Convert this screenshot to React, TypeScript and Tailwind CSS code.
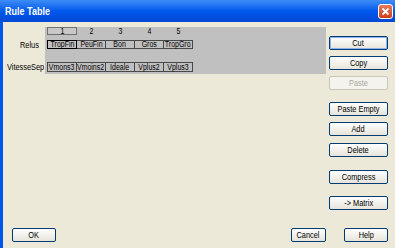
import React from "react";

const relus = ["TropFin", "PeuFin", "Bon", "Gros", "TropGro"];
const vitesse = ["Vmons3", "Vmoins2", "Ideale", "Vplus2", "Vplus3"];

// the dialog's text is a narrow, tall face: squeeze it sideways
function Narrow({ children, left = false }: { children: React.ReactNode; left?: boolean }) {
  return (
    <span className={`inline-block whitespace-nowrap scale-x-[0.82] ${left ? "origin-left" : "origin-center"}`}>
      {children}
    </span>
  );
}

function XpButton({
  label,
  className = "",
  disabled = false,
  focused = false,
}: {
  label: string;
  className?: string;
  disabled?: boolean;
  focused?: boolean;
}) {
  return (
    <div
      className={`h-[14px] flex items-center justify-center rounded-[2px] border text-[9px] leading-none ${
        disabled
          ? "border-[#C9C7BA] bg-[#F4F3EE] text-[#ACA899]"
          : "border-[#003C74] bg-linear-to-b from-white to-[#E6E4DA] text-black"
      } ${focused ? "shadow-[inset_0_0_0_1px_#8CB4F2]" : ""} ${className}`}
    >
      <Narrow>{label}</Narrow>
    </div>
  );
}

function Cell({ text, selected = false }: { text: string; selected?: boolean }) {
  return (
    <div
      className={`w-[30px] -ml-px first:ml-0 flex items-center justify-center text-[8.5px] leading-none ${
        selected ? "border border-black z-10" : "border border-[#484848]"
      }`}
    >
      <Narrow>{text}</Narrow>
    </div>
  );
}

export default function App() {
  return (
    <div className="w-[395px] h-[248px] overflow-hidden bg-[#ECE9D8] flex flex-col font-['Liberation_Sans',Arial,sans-serif] text-black">
      {/* title bar */}
      <div className="h-[22px] flex items-center justify-between pl-[5px] pr-[2px] bg-linear-to-b from-[#3D8DF7] via-[#0058EC] to-[#0248D4]">
        <span className="text-white font-bold text-[11px]">
          <Narrow left>Rule Table</Narrow>
        </span>
        <div className="w-[15px] h-[15px] rounded-[3px] border border-white bg-linear-to-b from-[#E9795A] to-[#D23A12] flex items-center justify-center">
          <svg width="9" height="9" viewBox="0 0 9 9">
            <path d="M1.5 1.5 L7.5 7.5 M7.5 1.5 L1.5 7.5" stroke="white" strokeWidth="1.8" />
          </svg>
        </div>
      </div>

      <div className="flex-1 flex flex-col border-l-[3px] border-[#0055EA] pb-[6px]">
        <div className="flex items-start">
          {/* grid area */}
          <div className="flex pt-[5px]">
            <div className="w-[42px] flex flex-col text-[9px] leading-none">
              <div className="h-[13px]" />
              <div className="h-[22px] pl-[17px] pt-[1px]">
                <Narrow left>Relus</Narrow>
              </div>
              <div className="h-[12px] pl-[4px] pt-[1px]">
                <Narrow left>VitesseSep</Narrow>
              </div>
            </div>
            <div className="w-[281px] h-[47px] bg-[#C0C0C0] pl-[2px]">
              <div className="h-[13px] flex">
                {[1, 2, 3, 4, 5].map((n) => (
                  <div
                    key={n}
                    className={`w-[30px] -ml-px first:ml-0 h-[8px] flex items-center justify-center text-[8.5px] leading-none ${
                      n === 1 ? "border border-[#707070] bg-[#C8C8C8]" : ""
                    }`}
                  >
                    <Narrow>{n}</Narrow>
                  </div>
                ))}
              </div>
              <div className="h-[22px]">
                <div className="h-[9px] flex">
                  {relus.map((t, i) => (
                    <Cell key={t} text={t} selected={i === 0} />
                  ))}
                </div>
              </div>
              <div className="h-[12px]">
                <div className="h-[10px] flex">
                  {vitesse.map((t) => (
                    <Cell key={t} text={t} />
                  ))}
                </div>
              </div>
            </div>
          </div>

          {/* right buttons */}
          <div className="ml-auto mr-[7px] w-[59px] flex flex-col pt-[14px]">
            <XpButton label="Cut" focused />
            <XpButton label="Copy" className="mt-[6px]" />
            <XpButton label="Paste" className="mt-[6px]" disabled />
            <XpButton label="Paste Empty" className="mt-[12px]" />
            <XpButton label="Add" className="mt-[6px]" />
            <XpButton label="Delete" className="mt-[7px]" />
            <XpButton label="Compress" className="mt-[13px]" />
            <XpButton label="-> Matrix" className="mt-[12px]" />
          </div>
        </div>

        {/* bottom buttons */}
        <div className="mt-auto flex items-center pl-[9px] pr-[7px]">
          <XpButton label="OK" className="w-[44px]" />
          <XpButton label="Cancel" className="w-[35px] ml-auto" />
          <XpButton label="Help" className="w-[44px] ml-[18px]" />
        </div>
      </div>
    </div>
  );
}
